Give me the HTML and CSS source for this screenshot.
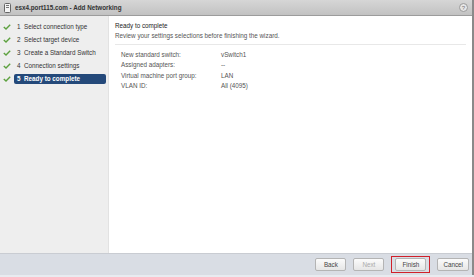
FILE: index.html
```html
<!DOCTYPE html>
<html lang="en">
<head>
    <meta charset="UTF-8">
    <title>Add Networking</title>
    <link rel="stylesheet" href="styles.css">
</head>
<body>
<div class="dialog">
    <!-- 标题栏 -->
    <div class="titlebar">
        <svg class="host-icon" width="7" height="10" viewBox="0 0 7 10">
            <rect x="0.5" y="0.5" width="6" height="9" rx="1" fill="#f4f4f4" stroke="#666"/>
            <rect x="2" y="2" width="3" height="1" fill="#777"/>
            <rect x="2" y="4" width="3" height="1" fill="#777"/>
        </svg>
        <span class="title">esx4.port115.com - Add Networking</span>
        <svg class="help" width="9" height="9" viewBox="0 0 9 9">
            <circle cx="4.5" cy="4.5" r="4" fill="#e6e6e6" stroke="#9a9a9a"/>
            <text x="4.5" y="7" text-anchor="middle" font-size="6" font-family="Liberation Sans" fill="#777">?</text>
        </svg>
    </div>
    <div class="main">
        <!-- 左侧步骤 -->
        <ul class="steps">
            <li><svg class="check" width="8" height="6" viewBox="0 0 8 6"><path d="M0.8 3 L3 5 L7.2 0.8" fill="none" stroke="#5da13f" stroke-width="1.4"/></svg><span class="step">1&nbsp; Select connection type</span></li>
            <li><svg class="check" width="8" height="6" viewBox="0 0 8 6"><path d="M0.8 3 L3 5 L7.2 0.8" fill="none" stroke="#5da13f" stroke-width="1.4"/></svg><span class="step">2&nbsp; Select target device</span></li>
            <li><svg class="check" width="8" height="6" viewBox="0 0 8 6"><path d="M0.8 3 L3 5 L7.2 0.8" fill="none" stroke="#5da13f" stroke-width="1.4"/></svg><span class="step">3&nbsp; Create a Standard Switch</span></li>
            <li><svg class="check" width="8" height="6" viewBox="0 0 8 6"><path d="M0.8 3 L3 5 L7.2 0.8" fill="none" stroke="#5da13f" stroke-width="1.4"/></svg><span class="step">4&nbsp; Connection settings</span></li>
            <li><svg class="check" width="8" height="6" viewBox="0 0 8 6"><path d="M0.8 3 L3 5 L7.2 0.8" fill="none" stroke="#5da13f" stroke-width="1.4"/></svg><span class="step current">5&nbsp; Ready to complete</span></li>
        </ul>
        <!-- 右侧内容 -->
        <div class="content">
            <div class="head">
                <div class="head-title">Ready to complete</div>
                <div class="head-desc">Review your settings selections before finishing the wizard.</div>
            </div>
            <table class="summary">
                <tr><td class="label">New standard switch:</td><td>vSwitch1</td></tr>
                <tr><td class="label">Assigned adapters:</td><td>--</td></tr>
                <tr><td class="label">Virtual machine port group:</td><td>LAN</td></tr>
                <tr><td class="label">VLAN ID:</td><td>All (4095)</td></tr>
            </table>
        </div>
    </div>
    <!-- 底部按钮 -->
    <div class="footer">
        <button class="btn">Back</button>
        <button class="btn" disabled>Next</button>
        <span class="finish-box"><button class="btn">Finish</button></span>
        <button class="btn">Cancel</button>
    </div>
</div>
</body>
</html>
```

FILE: styles.css
```css
* {
    margin: 0;
    padding: 0
}

body {
    width: 474px;
    height: 277px;
    background: #e8ebf0;
    font-family: "Liberation Sans", Arial, sans-serif;
    font-size: 6.3px;
    color: #333;
    overflow: hidden;
}

ul {
    list-style: none
}

.dialog {
    width: 472px;
    height: 275px;
    border-right: 2px solid #8a8a8a;
    display: flex;
    flex-direction: column;
    background: #fff;
}

.titlebar { /*标题栏渐变*/
    height: 15px;
    display: flex;
    align-items: center;
    padding: 0 4px 0 4px;
    background: linear-gradient(#d6d6d6, #c2c2c2);
    border-bottom: 1px solid #9c9c9c;
}

.host-icon {
    margin-right: 4px;
}

.title {
    flex: 1;
    font-weight: bold;
    color: #333;
}

.main {
    flex: 1;
    display: flex;
}

.steps {
    width: 108px;
    background: #eeeeee;
    border-right: 1px solid #e2e2e2;
    padding-top: 4px;
}

.steps li {
    height: 13px;
    display: flex;
    align-items: center;
}

.check {
    margin: 0 3px 0 3px;
}

.step {
    flex: 1;
    padding-left: 3px;
    margin-right: 2px;
    line-height: 10px;
}

.step.current { /*当前步骤*/
    background: #24497a;
    color: #fff;
    font-weight: bold;
    border-radius: 2px;
}

.content {
    flex: 1;
    padding: 5px 6px 0 6px;
}

.head {
    padding-bottom: 4px;
    border-bottom: 1px solid #e8e8e8;
    margin-bottom: 4px;
}

.head-title {
    line-height: 10px;
    color: #222;
}

.head-desc {
    line-height: 9px;
    color: #555;
}

.summary {
    border-collapse: collapse;
    margin-left: 6px;
}

.summary td {
    height: 10.5px;
    padding: 0;
    color: #555;
}

.summary .label {
    width: 100px;
}

.footer {
    height: 21px;
    background: #d9dde4;
    border-top: 1px solid #c9ccd2;
    display: flex;
    justify-content: flex-end;
    align-items: center;
    gap: 7px;
    padding-right: 3px;
}

.btn {
    height: 13px;
    min-width: 31px;
    padding: 0 5px;
    font-family: inherit;
    font-size: 6.3px;
    color: #444;
    background: linear-gradient(#fbfbfb, #e6e6e6);
    border: 1px solid #b4b4b4;
    border-radius: 2px;
}

.btn:disabled {
    color: #aaa;
}

.finish-box { /*红框*/
    display: flex;
    padding: 1px 3px;
    border: 1px solid #d0202a;
}
```
